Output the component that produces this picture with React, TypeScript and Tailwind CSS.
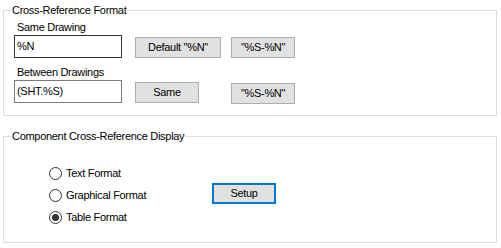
const font = { fontFamily: '"Liberation Sans", Arial, sans-serif' };

const Btn = ({ label, w, className = "" }: { label: string; w: string; className?: string }) => (
  <div
    className={`${w} h-[21px] bg-[#e1e1e1] border border-[#adadad] flex items-center justify-center text-[11px] leading-[13px] tracking-[-0.3px] text-black ${className}`}
  >
    {label}
  </div>
);

const Radio = ({ label, checked }: { label: string; checked?: boolean }) => (
  <div className="h-[22px] flex items-center">
    <div className="w-[13px] h-[13px] rounded-full border border-[#333] bg-white flex items-center justify-center">
      {checked && <div className="w-[7px] h-[7px] rounded-full bg-[#333]" />}
    </div>
    <span className="ml-[4px] text-[11px] leading-[13px] tracking-[-0.3px] text-black">{label}</span>
  </div>
);

export default function App() {
  return (
    <div className="w-[501px] h-[248px] bg-white pt-[10px] pl-[3px]" style={font}>
      {/* Cross-Reference Format */}
      <div className="relative w-[494px] h-[106px] border border-[#dcdcdc] pl-[10px] pt-[10px]">
        <span className="absolute -top-[7px] left-[7px] bg-white px-[1px] text-[11px] leading-[13px] tracking-[-0.3px] text-black">
          Cross-Reference Format
        </span>
        <div className="pl-[3px] text-[11px] leading-[13px] tracking-[-0.3px] text-black">Same Drawing</div>
        <div className="flex items-start mt-[1px]">
          <div className="w-[108px] h-[23px] border border-[#333] bg-white flex items-center pl-[2px] text-[11px] leading-[13px] tracking-[-0.3px] text-black">
            %N
          </div>
          <Btn label={'Default "%N"'} w="w-[86px]" className="ml-[13px] mt-[2px]" />
          <Btn label={'"%S-%N"'} w="w-[64px]" className="ml-[10px] mt-[2px]" />
        </div>
        <div className="pl-[3px] mt-[8px] text-[11px] leading-[13px] tracking-[-0.3px] text-black">Between Drawings</div>
        <div className="flex items-start mt-[1px]">
          <div className="w-[108px] h-[23px] border border-[#7a7a7a] bg-white flex items-center pl-[2px] text-[11px] leading-[13px] tracking-[-0.3px] text-black">
            (SHT.%S)
          </div>
          <Btn label="Same" w="w-[64px]" className="ml-[13px] mt-[2px]" />
          <Btn label={'"%S-%N"'} w="w-[64px]" className="ml-[32px] mt-[3px]" />
        </div>
      </div>

      {/* Component Cross-Reference Display */}
      <div className="relative mt-[20px] w-[494px] h-[107px] border border-[#dcdcdc] pl-[45px] pt-[25px]">
        <span className="absolute -top-[7px] left-[7px] bg-white px-[1px] text-[11px] leading-[13px] tracking-[-0.3px] text-black">
          Component Cross-Reference Display
        </span>
        <div className="flex items-center">
          <div className="w-[163px]">
            <Radio label="Text Format" />
            <Radio label="Graphical Format" />
            <Radio label="Table Format" checked />
          </div>
          <div className="w-[64px] h-[21px] -mt-[3px] bg-[#e1e1e1] border-2 border-[#0078d7] flex items-center justify-center text-[11px] leading-[13px] tracking-[-0.3px] text-black">
            Setup
          </div>
        </div>
      </div>
    </div>
  );
}
